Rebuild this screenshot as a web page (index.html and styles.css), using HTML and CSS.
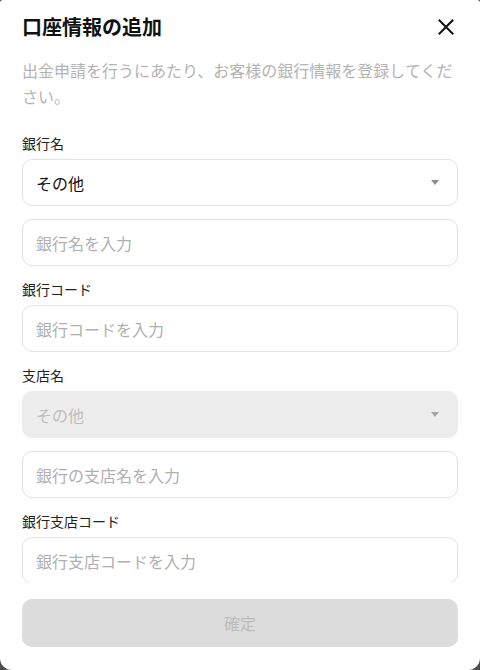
FILE: index.html
```html
<!DOCTYPE html>
<html lang="ja">
<head>
<meta charset="utf-8">
<title>口座情報の追加</title>
<link rel="stylesheet" href="styles.css">
</head>
<body>
<div class="modal">
  <div class="header">
    <h1 class="title">口座情報の追加</h1>
    <button class="close" aria-label="閉じる">
      <svg width="16" height="16" viewBox="0 0 16 16"><path d="M1.5 1.5L14.5 14.5M14.5 1.5L1.5 14.5" stroke="#111" stroke-width="2" stroke-linecap="square" fill="none"/></svg>
    </button>
  </div>
  <div class="body">
    <p class="desc">出金申請を行うにあたり、お客様の銀行情報を登録してください。</p>
    <div class="field">
      <label class="label">銀行名</label>
      <div class="select"><span class="value">その他</span><span class="arrow"></span></div>
    </div>
    <div class="field">
      <div class="input"><span class="ph">銀行名を入力</span></div>
    </div>
    <div class="field">
      <label class="label">銀行コード</label>
      <div class="input"><span class="ph">銀行コードを入力</span></div>
    </div>
    <div class="field">
      <label class="label">支店名</label>
      <div class="select disabled"><span class="value">その他</span><span class="arrow"></span></div>
    </div>
    <div class="field">
      <div class="input"><span class="ph">銀行の支店名を入力</span></div>
    </div>
    <div class="field">
      <label class="label">銀行支店コード</label>
      <div class="input"><span class="ph">銀行支店コードを入力</span></div>
    </div>
  </div>
  <div class="footer">
    <button class="submit" disabled>確定</button>
  </div>
</div>
</body>
</html>
```
FILE: styles.css
```css
* { box-sizing: border-box; }
html, body { margin: 0; padding: 0; }
body {
  background: #4d4d4d;
  font-family: "Noto Sans CJK JP", "Noto Sans", sans-serif;
  width: 480px;
  height: 670px;
  overflow: hidden;
}
.modal {
  width: 480px;
  height: 670px;
  background: #fff;
  border-radius: 3px 3px 12px 12px;
  display: flex;
  flex-direction: column;
}
.header {
  display: flex;
  align-items: center;
  justify-content: space-between;
  padding: 15px 24px 0 22px;
  height: 39px;
  flex: none;
}
.title {
  margin: 0;
  font-size: 20px;
  line-height: 24px;
  font-weight: 700;
  color: #111;
}
.close {
  border: 0;
  background: none;
  padding: 0;
  width: 16px;
  height: 16px;
  display: flex;
  margin-right: 2px;
}
.body {
  flex: 1;
  overflow: hidden;
  padding: 0 22px;
}
.desc {
  margin: 18px 0 24px;
  font-size: 16px;
  line-height: 26px;
  color: #b3b3b3;
}
.field {
  display: flex;
  flex-direction: column;
  margin-bottom: 13px;
}
.label {
  font-size: 14px;
  line-height: 20px;
  color: #222;
  margin-bottom: 6px;
}
.select, .input {
  height: 47px;
  border: 1px solid #e2e2e2;
  border-radius: 10px;
  display: flex;
  align-items: center;
  padding: 0 13px;
  font-size: 16px;
}
.select { justify-content: space-between; }
.value { color: #111; }
.ph { color: #b0b0b0; }
.arrow {
  width: 0;
  height: 0;
  border-left: 4.5px solid transparent;
  border-right: 4.5px solid transparent;
  border-top: 5px solid #8c8c8c;
  margin-right: 5px;
}
.select.disabled {
  background: #ededed;
  border-color: #ededed;
}
.select.disabled .value { color: #bdbdbd; }
.select.disabled .arrow { border-top-color: #a6a6a6; }
.footer {
  flex: none;
  padding: 16px 22px 23px;
}
.submit {
  width: 100%;
  height: 48px;
  border: 0;
  border-radius: 10px;
  background: #dcdcdc;
  color: #bcbcbc;
  font-family: inherit;
  font-size: 16px;
}
```
